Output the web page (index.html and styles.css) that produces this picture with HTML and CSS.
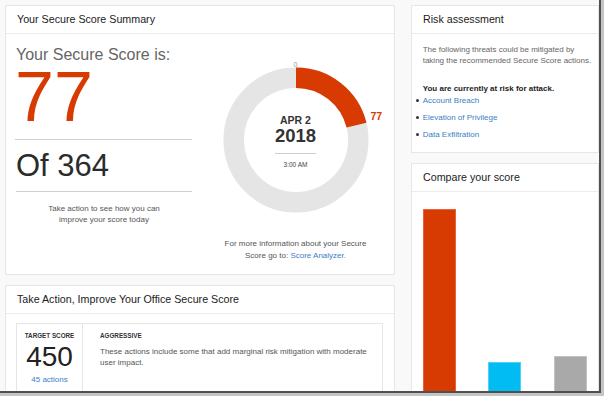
FILE: index.html
```html
<!DOCTYPE html>
<html>
<head>
<meta charset="utf-8">
<link rel="stylesheet" href="styles.css">
</head>
<body>
<div class="frame">
  <div class="col-left">
    <section class="card summary">
      <div class="card-head">Your Secure Score Summary</div>
      <div class="summary-body">
        <div class="score-col">
          <div class="score-label">Your Secure Score is:</div>
          <div class="score-value">77</div>
          <div class="score-of">Of 364</div>
          <div class="score-note">Take action to see how you can<br>improve your score today</div>
        </div>
        <div class="chart-col">
          <div class="donut">
            <svg class="donut-svg" width="190" height="180" viewBox="0 0 190 180">
              <circle cx="95" cy="100" r="62.3" fill="none" stroke="#e5e5e5" stroke-width="20.5"/>
              <path d="M95 37.7 A62.3 62.3 0 0 1 155.5 85.1" fill="none" stroke="#d83b01" stroke-width="20.5"/>
              <text x="94.5" y="26.5" text-anchor="middle" class="lbl-zero">0</text>
              <text x="169.5" y="80" class="lbl-val">77</text>
            </svg>
            <div class="donut-center">
              <div class="d-month">APR 2</div>
              <div class="d-year">2018</div>
              <div class="d-rule"></div>
              <div class="d-time">3:00 AM</div>
            </div>
          </div>
          <div class="more-info">For more information about your Secure<br>Score go to: <a class="link">Score Analyzer.</a></div>
        </div>
      </div>
    </section>
    <section class="card action">
      <div class="card-head">Take Action, Improve Your Office Secure Score</div>
      <div class="action-box">
        <div class="target">
          <div class="target-label">TARGET SCORE</div>
          <div class="target-value">450</div>
          <a class="link target-link">45 actions</a>
        </div>
        <div class="target-desc">
          <div class="desc-title">AGGRESSIVE</div>
          <div class="desc-text">These actions include some that add marginal risk mitigation with moderate<br>user impact.</div>
        </div>
      </div>
    </section>
  </div>
  <div class="col-right">
    <section class="card risk">
      <div class="card-head">Risk assessment</div>
      <div class="risk-body">
        <p class="risk-intro">The following threats could be mitigated by<br>taking the recommended Secure Score actions.</p>
        <p class="risk-alert">You are currently at risk for attack.</p>
        <ul class="risk-list">
          <li><a class="link">Account Breach</a></li>
          <li><a class="link">Elevation of Privilege</a></li>
          <li><a class="link">Data Exfiltration</a></li>
        </ul>
      </div>
    </section>
    <section class="card compare">
      <div class="card-head">Compare your score</div>
      <div class="bars">
        <div class="bar bar-you" style="height:186px"></div>
        <div class="bar bar-avg" style="height:33px"></div>
        <div class="bar bar-other" style="height:39px"></div>
      </div>
    </section>
  </div>
</div>
</body>
</html>
```

FILE: styles.css
```css
html, body {
  margin: 0;
  padding: 0;
}
body {
  background: #c4c4c4;
  font-family: "Liberation Sans", Arial, sans-serif;
  color: #333;
  width: 604px;
  height: 396px;
  overflow: hidden;
}
.frame {
  width: 594px;
  height: 386px;
  background: #f9f9f9;
  border-right: 2px solid #505050;
  border-bottom: 2px solid #505050;
  overflow: hidden;
  display: flex;
  padding: 5px 0 0 5px;
  box-sizing: content-box;
  gap: 16px;
}
.col-left {
  width: 390px;
  display: flex;
  flex-direction: column;
  gap: 10px;
  flex-shrink: 0;
}
.col-right {
  width: 188px;
  display: flex;
  flex-direction: column;
  gap: 10px;
  flex-shrink: 0;
}
.card {
  background: #fff;
  border: 1px solid #e6e6e6;
  box-sizing: border-box;
  flex-shrink: 0;
}
.card-head {
  height: 27px;
  line-height: 27px;
  border-bottom: 1px solid #ececec;
  padding-left: 11px;
  font-size: 10.7px;
  color: #222;
}
.summary {
  height: 270px;
}
.summary-body {
  display: flex;
}
.score-col {
  margin-left: 10px;
  width: 176px;
  flex-shrink: 0;
}
.score-label {
  margin-top: 10.5px;
  font-size: 16px;
  line-height: 20px;
  color: #666;
}
.score-value {
  font-size: 70px;
  line-height: 64px;
  color: #d83b01;
  margin-left: -1px;
  padding-bottom: 10px;
  border-bottom: 1px solid #cfcfcf;
}
.score-of {
  margin-top: 8px;
  font-size: 31px;
  line-height: 36px;
  color: #2b2b2b;
  padding-bottom: 7px;
  border-bottom: 1px solid #cfcfcf;
}
.score-note {
  margin-top: 11px;
  font-size: 8px;
  line-height: 11.5px;
  color: #555;
  text-align: center;
}
.chart-col {
  flex: 1;
  min-width: 0;
  padding-left: 5px;
  display: flex;
  flex-direction: column;
  align-items: center;
}
.donut {
  position: relative;
  width: 190px;
  height: 180px;
  margin-top: 6px;
}
.donut-svg {
  display: block;
}
.lbl-zero {
  font-family: "Liberation Sans", Arial, sans-serif;
  font-size: 7px;
  fill: #999;
}
.lbl-val {
  font-family: "Liberation Sans", Arial, sans-serif;
  font-size: 10.5px;
  font-weight: bold;
  fill: #d83b01;
}
.donut-center {
  position: absolute;
  top: 74px;
  left: 0;
  right: 0;
  display: flex;
  flex-direction: column;
  align-items: center;
  color: #333;
}
.d-month {
  font-size: 10.5px;
  line-height: 12px;
  font-weight: bold;
}
.d-year {
  font-size: 18.5px;
  line-height: 20px;
  font-weight: bold;
}
.d-rule {
  width: 41px;
  margin-top: 7.4px;
  border-top: 1px solid #cfcfcf;
}
.d-time {
  margin-top: 6.7px;
  font-size: 6.5px;
  line-height: 8px;
  color: #444;
}
.more-info {
  margin-top: 18px;
  font-size: 8px;
  line-height: 12px;
  color: #555;
  text-align: center;
  white-space: nowrap;
}
.link {
  color: #3a80c6;
  text-decoration: none;
}
.action {
  height: 140px;
}
.action-box {
  margin: 8.5px 11px 0 10px;
  border: 1px solid #e6e6e6;
  display: flex;
  height: 120px;
}
.target {
  width: 65px;
  border-right: 1px solid #e6e6e6;
  display: flex;
  flex-direction: column;
  align-items: center;
  padding-top: 8px;
}
.target-label {
  font-size: 6.3px;
  line-height: 8px;
  font-weight: bold;
  color: #333;
}
.target-value {
  margin-top: 2px;
  font-size: 28px;
  line-height: 30px;
  color: #222;
}
.target-link {
  margin-top: 3px;
  font-size: 8px;
  line-height: 10px;
}
.target-desc {
  padding: 8px 0 0 17px;
}
.desc-title {
  font-size: 6.3px;
  line-height: 8px;
  font-weight: bold;
  color: #333;
}
.desc-text {
  margin-top: 6.5px;
  font-size: 8px;
  line-height: 11px;
  color: #555;
}
.risk {
  height: 148px;
}
.risk-body {
  padding: 9.5px 0 0 10.7px;
}
.risk-intro {
  margin: 0;
  font-size: 8px;
  line-height: 11px;
  color: #666;
}
.risk-alert {
  margin: 17px 0 0 0;
  font-size: 8px;
  line-height: 11px;
  font-weight: bold;
  color: #222;
}
.risk-list {
  list-style: none;
  margin: 1.7px 0 0 0;
  padding: 0;
}
.risk-list li {
  display: flex;
  align-items: center;
  font-size: 8px;
  line-height: 11px;
  margin-bottom: 5.7px;
}
.risk-list li::before {
  content: "";
  width: 3px;
  height: 3px;
  border-radius: 50%;
  background: #333;
  margin-left: -7px;
  margin-right: 4px;
}
.compare {
  height: 240px;
}
.bars {
  height: 203px;
  display: flex;
  align-items: flex-end;
  padding-left: 10.7px;
  gap: 32.5px;
}
.bar {
  width: 33px;
  box-sizing: border-box;
}
.bar-you {
  background: #d83b01;
  border: 1px solid #e8623a;
}
.bar-avg {
  background: #00bcf2;
  border: 1px solid #4fd0f5;
}
.bar-other {
  background: #a9a9a9;
  border: 1px solid #c2c2c2;
}
```
